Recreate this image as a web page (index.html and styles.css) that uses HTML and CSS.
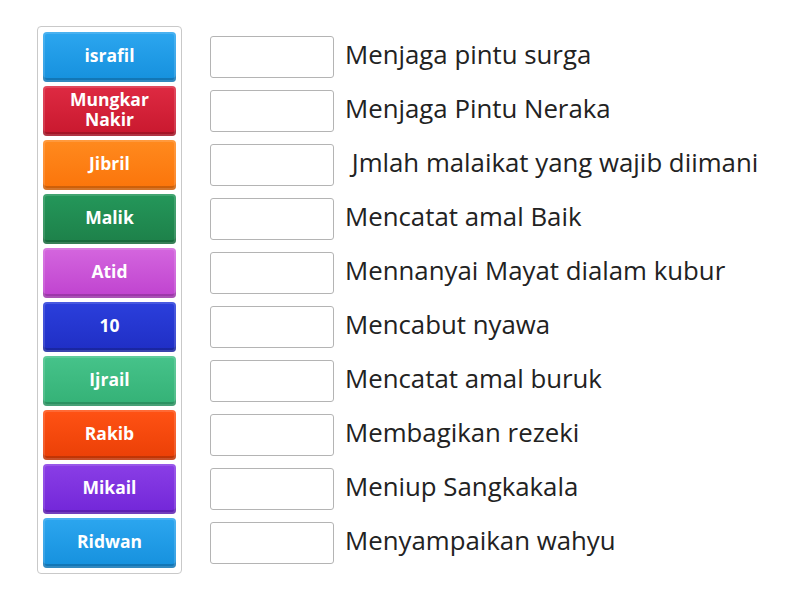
FILE: index.html
```html
<!DOCTYPE html>
<html lang="en">

<head>
    <meta charset="UTF-8">
    <meta name="viewport" content="width=device-width, initial-scale=1.0">
    <title>Malaikat Match Up</title>
    <link rel="stylesheet" href="styles.css">
</head>

<body>
    <div class="activity">
        <!-- answer tiles to drag -->
        <div class="tile-box">
            <div class="tile blue">israfil</div>
            <div class="tile red">Mungkar<br>Nakir</div>
            <div class="tile orange">Jibril</div>
            <div class="tile green">Malik</div>
            <div class="tile violet">Atid</div>
            <div class="tile navy">10</div>
            <div class="tile mint">Ijrail</div>
            <div class="tile flame">Rakib</div>
            <div class="tile purple">Mikail</div>
            <div class="tile blue">Ridwan</div>
        </div>

        <!-- drop slots with their questions -->
        <div class="questions">
            <div class="row"><div class="slot"></div><span class="label">Menjaga pintu surga</span></div>
            <div class="row"><div class="slot"></div><span class="label">Menjaga Pintu Neraka</span></div>
            <div class="row"><div class="slot"></div><span class="label">&nbsp;Jmlah malaikat yang wajib diimani</span></div>
            <div class="row"><div class="slot"></div><span class="label">Mencatat amal Baik</span></div>
            <div class="row"><div class="slot"></div><span class="label">Mennanyai Mayat dialam kubur</span></div>
            <div class="row"><div class="slot"></div><span class="label">Mencabut nyawa</span></div>
            <div class="row"><div class="slot"></div><span class="label">Mencatat amal buruk</span></div>
            <div class="row"><div class="slot"></div><span class="label">Membagikan rezeki</span></div>
            <div class="row"><div class="slot"></div><span class="label">Meniup Sangkakala</span></div>
            <div class="row"><div class="slot"></div><span class="label">Menyampaikan wahyu</span></div>
        </div>
    </div>
</body>

</html>
```

FILE: styles.css
```css
* {
    margin: 0;
    padding: 0;
    box-sizing: border-box;
    font-family: 'Open Sans', sans-serif;
}

body {
    background: #fff;
}

.activity {
    display: flex;
    align-items: flex-start;
    padding: 26px 0 0 37px;
}

.tile-box {
    display: flex;
    flex-direction: column;
    gap: 4px;
    padding: 5px;
    border: 1px solid #c9c9c9;
    border-radius: 4px;
}

.tile {
    width: 133px;
    height: 50px;
    display: flex;
    align-items: center;
    justify-content: center;
    text-align: center;
    color: #fff;
    font-size: 17.5px;
    font-weight: 700;
    line-height: 20px;
    padding-bottom: 5px;
    border-radius: 4px;
    box-shadow: inset 0 0 0 2px rgba(255, 255, 255, 0.14), inset 0 -4px 0 rgba(0, 0, 0, 0.18);
}

.blue   { background: linear-gradient(#2ca6ef, #1590dd); }
.red    { background: linear-gradient(#de2a42, #c8182e); }
.orange { background: linear-gradient(#ff8a1e, #fb740a); }
.green  { background: linear-gradient(#24975a, #1d8049); }
.violet { background: linear-gradient(#d466de, #bf42cf); }
.navy   { background: linear-gradient(#2b3fdc, #1f2ec4); }
.mint   { background: linear-gradient(#46c38a, #34b176); }
.flame  { background: linear-gradient(#ff5214, #ea3f06); }
.purple { background: linear-gradient(#8a3ee6, #7226d8); }

.questions {
    display: flex;
    flex-direction: column;
    gap: 4px;
    margin-left: 28px;
    padding-top: 6px;
}

.row {
    height: 50px;
    display: flex;
    align-items: center;
}

.slot {
    flex: none;
    width: 124px;
    height: 42px;
    border: 1px solid #b4b4b4;
    border-radius: 3px;
    background: #fff;
}

.label {
    margin-left: 11px;
    padding-bottom: 7px;
    font-size: 25.8px;
    color: #222;
    white-space: nowrap;
}
```
